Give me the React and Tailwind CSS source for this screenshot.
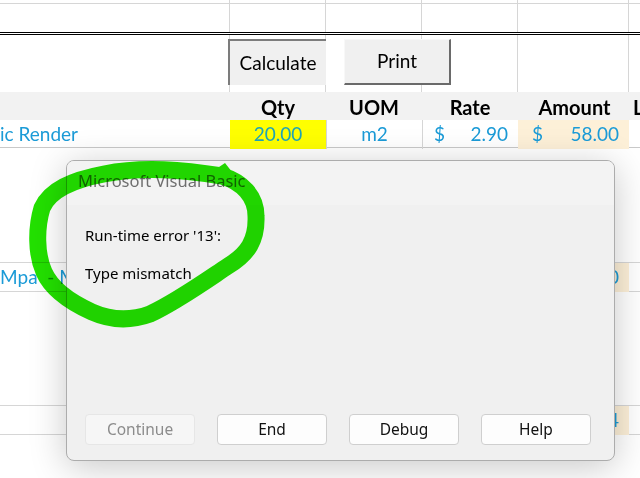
import React from 'react'

const sheetFont = { fontFamily: 'Lato, "Liberation Sans", sans-serif' }
const dlgFont = { fontFamily: '"Noto Sans", "Open Sans", sans-serif' }

const cols = 'grid grid-cols-[230px_96px_96px_96px_111px_1fr]'
const line = 'border-[#d6d6d6]'

function GridRow({ h, bottom = true }) {
  return (
    <div className={`${cols} ${h} ${bottom ? `border-b ${line}` : ''}`}>
      {[0, 1, 2, 3, 4].map((i) => (
        <div key={i} className={`border-r ${line}`} />
      ))}
      <div />
    </div>
  )
}

function DialogButton({ children, disabled }) {
  return (
    <button
      className={
        disabled
          ? 'w-[110px] h-[31px] rounded-[4px] border border-[#e6e6e6] bg-[#f6f6f6] text-[#8c8c8c] text-[15.5px]'
          : 'w-[110px] h-[31px] rounded-[4px] border border-[#cfcfcf] bg-[#fdfdfd] text-[#111] text-[15.5px]'
      }
    >
      {children}
    </button>
  )
}

export default function App() {
  return (
    <div className="relative w-[640px] h-[478px] overflow-hidden bg-white text-black" style={sheetFont}>
      {/* top rows */}
      <GridRow h="h-[4px]" />
      <div className={`${cols} h-[31px] border-b-[3px] border-double border-black`}>
        {[0, 1, 2, 3, 4].map((i) => (
          <div key={i} className={`border-r ${line}`} />
        ))}
        <div />
      </div>

      {/* buttons row */}
      <div className="relative">
        <GridRow h="h-[57px]" bottom={false} />
        <div className="absolute left-[228px] top-[4px] w-[98px] h-[46px] flex items-center justify-center bg-[#f0f0f0] border-t-2 border-l-2 border-[#7c7c7c] text-[19px]">
          Calculate
        </div>
        <div className="absolute left-[344px] top-[4px] w-[107px] h-[46px] flex items-center justify-center pb-[1px] bg-[#f0f0f0] border-r-2 border-b-2 border-[#6a6a6a] border-t border-l border-t-[#f8f8f8] border-l-[#f8f8f8] text-[19px]">
          Print
        </div>
      </div>

      {/* header row */}
      <div className={`${cols} h-[28px] bg-[#f2f2f2] font-bold text-[20px] items-center`}>
        <div />
        <div className="text-center">Qty</div>
        <div className="text-center">UOM</div>
        <div className="text-center">Rate</div>
        <div className="text-center pl-[2px]">Amount</div>
        <div className="pl-[4px]">L</div>
      </div>

      {/* data row */}
      <div className={`${cols} h-[28px] border-b border-[#c9c9c9] text-[19px] text-[#1b9bd7]`}>
        <div className="flex items-center whitespace-nowrap">ic Render</div>
        <div className="flex items-center justify-center bg-[#ffff00] text-[#1fa5b8]">20.00</div>
        <div className={`flex items-center justify-center border-l ${line}`}>m2</div>
        <div className={`flex items-center justify-between pl-[11px] pr-[10px] border-l ${line}`}>
          <span>$</span>
          <span>2.90</span>
        </div>
        <div className="flex items-center justify-between pl-[14px] pr-[10px] bg-[#fdf0d8]">
          <span>$</span>
          <span>58.00</span>
        </div>
        <div />
      </div>

      <div className="h-[114px]" />

      <div className={`${cols} h-[30px] border-y ${line} text-[19px] text-[#1b9bd7]`}>
        <div className="flex items-center whitespace-nowrap">Mpa&nbsp;&nbsp;- Mortar</div>
        <div />
        <div />
        <div />
        <div className="flex items-center justify-between pl-[14px] pr-[10px] bg-[#fdf0d8]">
          <span>$</span>
          <span>120.00</span>
        </div>
        <div />
      </div>

      <div className="h-[113px]" />

      <div className={`${cols} h-[30px] border-y ${line} text-[19px] text-[#1b9bd7]`}>
        <div />
        <div />
        <div />
        <div />
        <div className="flex items-center justify-between pl-[14px] pr-[10px] bg-[#fdf0d8]">
          <span>$</span>
          <span>45.14</span>
        </div>
        <div />
      </div>

      {/* VBA error dialog */}
      <div
        className="absolute left-[66px] top-[160px] w-[549px] h-[301px] rounded-[8px] border border-[#acacac] bg-[#f0f0f0] shadow-[0_6px_36px_rgba(0,0,0,0.22)] flex flex-col overflow-hidden"
        style={dlgFont}
      >
        <div className="h-[44px] bg-[#f3f3f3] pl-[11px] pt-[8px] text-[16.5px] text-[#6e6e6e]">Microsoft Visual Basic</div>
        <div className="flex-1 flex flex-col pl-[18px] pt-[19px] gap-[15px] text-[15px] text-black">
          <div>Run-time error '13':</div>
          <div>Type mismatch</div>
        </div>
        <div className="flex gap-[22px] pl-[18px] pb-[15px]">
          <DialogButton disabled>Continue</DialogButton>
          <DialogButton>End</DialogButton>
          <DialogButton>Debug</DialogButton>
          <DialogButton>Help</DialogButton>
        </div>
      </div>

      {/* hand-drawn green annotation */}
      <svg className="absolute inset-0 pointer-events-none mix-blend-multiply" width="640" height="478" viewBox="0 0 640 478">
        <path
          d="M222 176 C242 182 256 196 256 216 C257 240 248 254 228 266 C204 282 176 302 150 314 C128 322 110 320 92 312 C70 302 52 290 44 272 C36 254 36 228 42 208 C50 190 72 180 104 174 C144 166 184 170 222 176"
          fill="none"
          stroke="#22e000"
          strokeWidth="17"
          strokeLinecap="round"
          strokeLinejoin="round"
        />
        <path d="M216 169 L225 163 L236 177 L221 184 Z" fill="#22e000" />
      </svg>
    </div>
  )
}
